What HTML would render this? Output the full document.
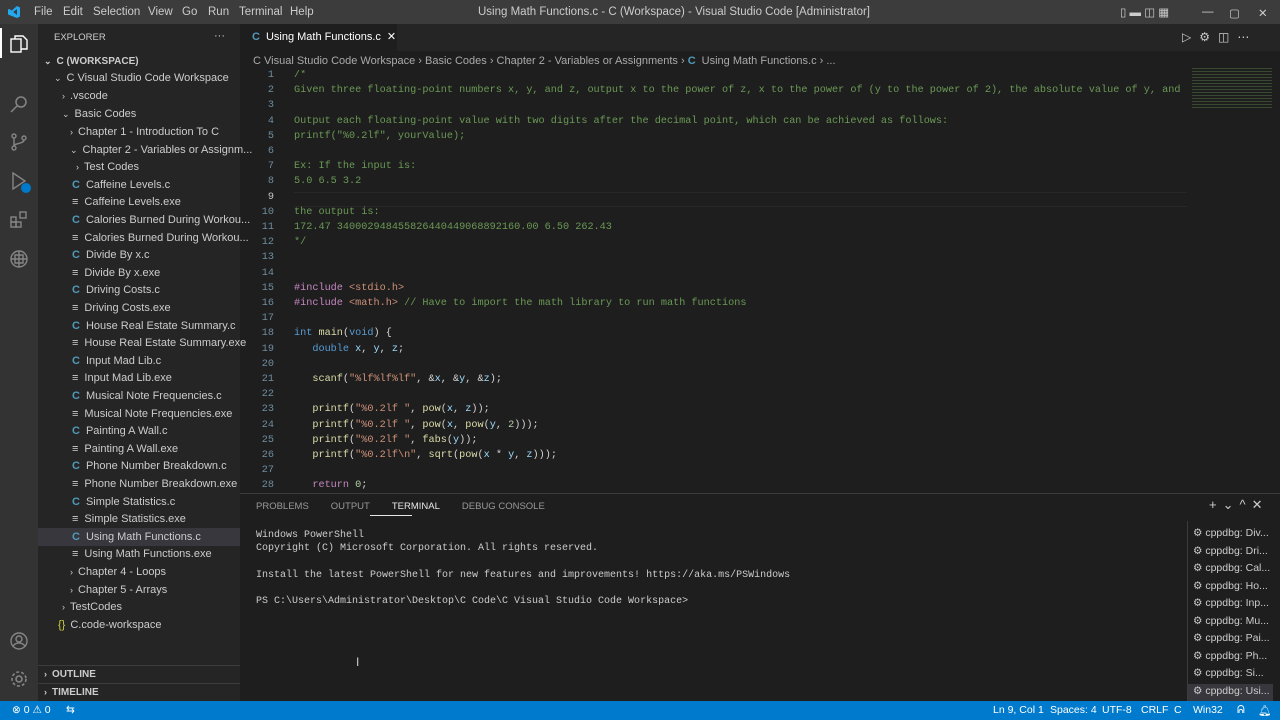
<!DOCTYPE html>
<html><head><meta charset="utf-8"><style>
*{margin:0;padding:0;box-sizing:border-box}
body{width:1280px;height:720px;overflow:hidden;background:#1e1e1e;font-family:"Liberation Sans",sans-serif;font-size:11px;color:#ccc;position:relative}
.abs{position:absolute}
#title{left:0;top:0;width:1280px;height:24px;background:#3c3c3c}
#title span{position:absolute;top:6px;font-size:11.5px;color:#ccc}
#act{left:0;top:24px;width:38px;height:677px;background:#333}
#side{left:38px;top:24px;width:202px;height:677px;background:#252526}
.it{position:absolute;font-size:11px;color:#ccc;white-space:nowrap;height:17px;line-height:17px}
.c{color:#519aba;font-weight:bold;margin-right:6px}
.car{color:#ccc;margin-right:5px;font-size:9px}
#code{left:240px;top:70px;width:950px;height:423px;overflow:hidden}
.ln{position:absolute;left:0;width:34px;text-align:right;color:#6f8ea0;font-family:"Liberation Mono",monospace;font-size:10.2px}
.cl{position:absolute;left:54px;white-space:pre;font-family:"Liberation Mono",monospace;font-size:10.2px;color:#d4d4d4}
.g{color:#6a9955}.k{color:#569cd6}.f{color:#dcdcaa}.s{color:#ce9178}.v{color:#9cdcfe}.n{color:#b5cea8}.p{color:#c586c0}
#status{left:0;top:701px;width:1280px;height:19px;background:#007acc;color:#fff}
#status span{position:absolute;top:3px;font-size:10.5px;white-space:nowrap}
.t{position:absolute;left:256px;white-space:pre;font-family:"Liberation Mono",monospace;font-size:10px;color:#ccc}
.dbg{position:absolute;left:1193px;font-size:10.5px;color:#ccc;white-space:nowrap}
</style></head><body>
<div id="title" class="abs">
<svg class="abs" style="left:7px;top:5px" width="14" height="14" viewBox="0 0 14 14"><path d="M10 1 L13 2.5 V11.5 L10 13 L3 7 L10 1Z M10 4 L6 7 L10 10Z M1 4.5 L2.5 4 L10 10 V13 L1 9.5 Z" fill="#23a9f2"/></svg>
<span style="left:34px">File</span><span style="left:63px">Edit</span><span style="left:93px">Selection</span><span style="left:148px">View</span><span style="left:182px">Go</span><span style="left:208px">Run</span><span style="left:239px">Terminal</span><span style="left:290px">Help</span>
<span style="left:478px">Using Math Functions.c - C (Workspace) - Visual Studio Code [Administrator]</span>
<span style="left:1120px;top:5px">▯ ▬ ◫ ▦</span><span style="left:1202px">—</span><span style="left:1229px">▢</span><span style="left:1258px">✕</span>
</div>
<div id="act" class="abs">
<div class="abs" style="left:0;top:4px;width:2px;height:30px;background:#fff"></div>
<svg class="abs" style="left:9px;top:10px" width="20" height="20" viewBox="0 0 20 20" fill="none" stroke="#fff" stroke-width="1.4"><path d="M6 5V2h8l4 4v9h-6"/><rect x="2" y="5" width="10" height="13"/></svg>
<svg class="abs" style="left:9px;top:70px" width="20" height="20" viewBox="0 0 20 20" fill="none" stroke="#858585" stroke-width="1.5"><circle cx="12" cy="8" r="5"/><path d="M8 12 L2 18"/></svg>
<svg class="abs" style="left:9px;top:108px" width="20" height="20" viewBox="0 0 20 20" fill="none" stroke="#858585" stroke-width="1.4"><circle cx="5" cy="4" r="2"/><circle cx="5" cy="16" r="2"/><circle cx="15" cy="6" r="2"/><path d="M5 6v8M15 8c0 4-10 3-10 6"/></svg>
<svg class="abs" style="left:8px;top:146px" width="24" height="24" viewBox="0 0 24 24" fill="none" stroke="#858585" stroke-width="1.4"><path d="M5 3 L17 11 L5 19Z"/><circle cx="18" cy="18" r="5" fill="#007acc" stroke="none"/></svg>
<svg class="abs" style="left:9px;top:186px" width="20" height="20" viewBox="0 0 20 20" fill="none" stroke="#858585" stroke-width="1.4"><rect x="2" y="7" width="5" height="5"/><rect x="7" y="12" width="5" height="5"/><rect x="2" y="12" width="5" height="5"/><rect x="11" y="2" width="6" height="6"/></svg>
<svg class="abs" style="left:9px;top:225px" width="20" height="20" viewBox="0 0 20 20" fill="none" stroke="#858585" stroke-width="1.4"><circle cx="10" cy="10" r="8"/><path d="M6 6h8v8H6zM10 2v16M2 10h16"/></svg>
<svg class="abs" style="left:9px;top:607px" width="20" height="20" viewBox="0 0 20 20" fill="none" stroke="#858585" stroke-width="1.4"><circle cx="10" cy="10" r="8"/><circle cx="10" cy="8" r="3"/><path d="M4 15c3-4 9-4 12 0"/></svg>
<svg class="abs" style="left:9px;top:645px" width="20" height="20" viewBox="0 0 20 20" fill="none" stroke="#858585" stroke-width="1.6"><circle cx="10" cy="10" r="3"/><circle cx="10" cy="10" r="7" stroke-dasharray="3 2"/></svg>
</div>
<div id="side" class="abs">
<div class="it" style="left:16px;top:5px;font-size:9.5px">EXPLORER</div><div class="it" style="left:176px;top:4px">···</div>
<div class="it" style="left:6px;top:29px;font-weight:bold;font-size:10px"><span class="car">⌄</span>C (WORKSPACE)</div>
<div class="it" style="left:16px;top:46px"><span class="car">⌄</span>C Visual Studio Code Workspace</div>
<div class="it" style="left:24px;top:64px"><span class="car">›</span>.vscode</div>
<div class="it" style="left:24px;top:82px"><span class="car">⌄</span>Basic Codes</div>
<div class="it" style="left:32px;top:100px"><span class="car">›</span>Chapter 1 - Introduction To C</div>
<div class="it" style="left:32px;top:118px"><span class="car">⌄</span>Chapter 2 - Variables or Assignm...</div>
<div class="it" style="left:38px;top:135px"><span class="car">›</span>Test Codes</div>
<div class="it" style="left:34px;top:153px"><span class="c">C</span>Caffeine Levels.c</div>
<div class="it" style="left:34px;top:170px"><span class="c" style="color:#ccc">≡</span>Caffeine Levels.exe</div>
<div class="it" style="left:34px;top:188px"><span class="c">C</span>Calories Burned During Workou...</div>
<div class="it" style="left:34px;top:206px"><span class="c" style="color:#ccc">≡</span>Calories Burned During Workou...</div>
<div class="it" style="left:34px;top:223px"><span class="c">C</span>Divide By x.c</div>
<div class="it" style="left:34px;top:241px"><span class="c" style="color:#ccc">≡</span>Divide By x.exe</div>
<div class="it" style="left:34px;top:258px"><span class="c">C</span>Driving Costs.c</div>
<div class="it" style="left:34px;top:276px"><span class="c" style="color:#ccc">≡</span>Driving Costs.exe</div>
<div class="it" style="left:34px;top:294px"><span class="c">C</span>House Real Estate Summary.c</div>
<div class="it" style="left:34px;top:311px"><span class="c" style="color:#ccc">≡</span>House Real Estate Summary.exe</div>
<div class="it" style="left:34px;top:329px"><span class="c">C</span>Input Mad Lib.c</div>
<div class="it" style="left:34px;top:346px"><span class="c" style="color:#ccc">≡</span>Input Mad Lib.exe</div>
<div class="it" style="left:34px;top:364px"><span class="c">C</span>Musical Note Frequencies.c</div>
<div class="it" style="left:34px;top:382px"><span class="c" style="color:#ccc">≡</span>Musical Note Frequencies.exe</div>
<div class="it" style="left:34px;top:399px"><span class="c">C</span>Painting A Wall.c</div>
<div class="it" style="left:34px;top:417px"><span class="c" style="color:#ccc">≡</span>Painting A Wall.exe</div>
<div class="it" style="left:34px;top:434px"><span class="c">C</span>Phone Number Breakdown.c</div>
<div class="it" style="left:34px;top:452px"><span class="c" style="color:#ccc">≡</span>Phone Number Breakdown.exe</div>
<div class="it" style="left:34px;top:470px"><span class="c">C</span>Simple Statistics.c</div>
<div class="it" style="left:34px;top:487px"><span class="c" style="color:#ccc">≡</span>Simple Statistics.exe</div>
<div class="abs" style="left:0;top:504px;width:202px;height:18px;background:#37373d"></div>
<div class="it" style="left:34px;top:505px"><span class="c">C</span>Using Math Functions.c</div>
<div class="it" style="left:34px;top:522px"><span class="c" style="color:#ccc">≡</span>Using Math Functions.exe</div>
<div class="it" style="left:32px;top:540px"><span class="car">›</span>Chapter 4 - Loops</div>
<div class="it" style="left:32px;top:558px"><span class="car">›</span>Chapter 5 - Arrays</div>
<div class="it" style="left:24px;top:575px"><span class="car">›</span>TestCodes</div>
<div class="it" style="left:20px;top:593px"><span style="color:#cbcb41;margin-right:5px">{}</span>C.code-workspace</div>
<div class="abs" style="left:0;top:641px;width:202px;height:1px;background:#3c3c3c"></div>
<div class="it" style="left:6px;top:642px;font-weight:bold;font-size:10px"><span class="car">›</span>OUTLINE</div>
<div class="abs" style="left:0;top:659px;width:202px;height:1px;background:#3c3c3c"></div>
<div class="it" style="left:6px;top:660px;font-weight:bold;font-size:10px"><span class="car">›</span>TIMELINE</div>
</div>
<div class="abs" style="left:240px;top:24px;width:1040px;height:27px;background:#252526"></div>
<div class="abs" style="left:240px;top:24px;width:157px;height:27px;background:#1e1e1e;font-size:11px;line-height:27px;padding-left:12px;color:#fff;white-space:nowrap"><span class="c">C</span>Using Math Functions.c<span style="margin-left:6px">✕</span></div>
<div class="abs" style="left:1182px;top:30px;color:#ccc;font-size:12px;letter-spacing:8px;white-space:nowrap">▷⚙◫⋯</div>
<div class="abs" style="left:253px;top:55px;font-size:11px;color:#aaa;white-space:nowrap">C Visual Studio Code Workspace › Basic Codes › Chapter 2 - Variables or Assignments › <span class="c">C</span>Using Math Functions.c › ...</div>
<div class="abs" style="left:294px;top:192px;width:893px;height:15px;border-top:1px solid #282828;border-bottom:1px solid #282828"></div>
<div id="code" class="abs">
<div class="ln" style="top:0">1</div><div class="cl g" style="top:0">/*</div>
<div class="ln" style="top:15.2px">2</div><div class="cl g" style="top:15.2px">Given three floating-point numbers x, y, and z, output x to the power of z, x to the power of (y to the power of 2), the absolute value of y, and</div>
<div class="ln" style="top:30.4px">3</div>
<div class="ln" style="top:45.6px">4</div><div class="cl g" style="top:45.6px">Output each floating-point value with two digits after the decimal point, which can be achieved as follows:</div>
<div class="ln" style="top:60.8px">5</div><div class="cl g" style="top:60.8px">printf("%0.2lf", yourValue);</div>
<div class="ln" style="top:76px">6</div>
<div class="ln" style="top:91.2px">7</div><div class="cl g" style="top:91.2px">Ex: If the input is:</div>
<div class="ln" style="top:106.4px">8</div><div class="cl g" style="top:106.4px">5.0 6.5 3.2</div>
<div class="ln" style="top:121.6px;color:#c6c6c6">9</div>
<div class="ln" style="top:136.8px">10</div><div class="cl g" style="top:136.8px">the output is:</div>
<div class="ln" style="top:152px">11</div><div class="cl g" style="top:152px">172.47 340002948455826440449068892160.00 6.50 262.43</div>
<div class="ln" style="top:167.2px">12</div><div class="cl g" style="top:167.2px">*/</div>
<div class="ln" style="top:182.4px">13</div>
<div class="ln" style="top:197.6px">14</div>
<div class="ln" style="top:212.8px">15</div><div class="cl" style="top:212.8px"><span class="p">#include</span> <span class="s">&lt;stdio.h&gt;</span></div>
<div class="ln" style="top:228px">16</div><div class="cl" style="top:228px"><span class="p">#include</span> <span class="s">&lt;math.h&gt;</span> <span class="g">// Have to import the math library to run math functions</span></div>
<div class="ln" style="top:243.2px">17</div>
<div class="ln" style="top:258.4px">18</div><div class="cl" style="top:258.4px"><span class="k">int</span> <span class="f">main</span>(<span class="k">void</span>) {</div>
<div class="ln" style="top:273.6px">19</div><div class="cl" style="top:273.6px">   <span class="k">double</span> <span class="v">x</span>, <span class="v">y</span>, <span class="v">z</span>;</div>
<div class="ln" style="top:288.8px">20</div>
<div class="ln" style="top:304px">21</div><div class="cl" style="top:304px">   <span class="f">scanf</span>(<span class="s">"%lf%lf%lf"</span>, &amp;<span class="v">x</span>, &amp;<span class="v">y</span>, &amp;<span class="v">z</span>);</div>
<div class="ln" style="top:319.2px">22</div>
<div class="ln" style="top:334.4px">23</div><div class="cl" style="top:334.4px">   <span class="f">printf</span>(<span class="s">"%0.2lf "</span>, <span class="f">pow</span>(<span class="v">x</span>, <span class="v">z</span>));</div>
<div class="ln" style="top:349.6px">24</div><div class="cl" style="top:349.6px">   <span class="f">printf</span>(<span class="s">"%0.2lf "</span>, <span class="f">pow</span>(<span class="v">x</span>, <span class="f">pow</span>(<span class="v">y</span>, <span class="n">2</span>)));</div>
<div class="ln" style="top:364.8px">25</div><div class="cl" style="top:364.8px">   <span class="f">printf</span>(<span class="s">"%0.2lf "</span>, <span class="f">fabs</span>(<span class="v">y</span>));</div>
<div class="ln" style="top:380px">26</div><div class="cl" style="top:380px">   <span class="f">printf</span>(<span class="s">"%0.2lf\n"</span>, <span class="f">sqrt</span>(<span class="f">pow</span>(<span class="v">x</span> * <span class="v">y</span>, <span class="v">z</span>)));</div>
<div class="ln" style="top:395.2px">27</div>
<div class="ln" style="top:410.4px">28</div><div class="cl" style="top:410.4px">   <span class="p">return</span> <span class="n">0</span>;</div>
</div>
<div class="abs" style="left:1192px;top:68px;width:80px;height:40px;opacity:.35;background:repeating-linear-gradient(#6a9955 0 1px,transparent 1px 3px);"></div>
<div class="abs" style="left:240px;top:493px;width:1040px;height:208px;background:#1e1e1e;border-top:1px solid #3c3c3c"></div>
<div class="abs" style="left:256px;top:501px;font-size:9.5px;color:#999;white-space:nowrap">PROBLEMS<span style="margin-left:22px">OUTPUT</span><span style="margin-left:22px;color:#e7e7e7">TERMINAL</span><span style="margin-left:22px">DEBUG CONSOLE</span></div>
<div class="abs" style="left:370px;top:515px;width:42px;height:1px;background:#e7e7e7"></div>
<div class="abs" style="left:1209px;top:497px;color:#ccc;font-size:13px;letter-spacing:6px;white-space:nowrap">+⌄^✕</div>
<div class="t" style="top:530px">Windows PowerShell</div>
<div class="t" style="top:543px">Copyright (C) Microsoft Corporation. All rights reserved.</div>
<div class="t" style="top:570px">Install the latest PowerShell for new features and improvements! https://aka.ms/PSWindows</div>
<div class="t" style="top:596px">PS C:\Users\Administrator\Desktop\C Code\C Visual Studio Code Workspace&gt;</div>
<div class="abs" style="left:356px;top:655px;color:#ccc;font-size:12px">I</div>
<div class="abs" style="left:1187px;top:521px;width:1px;height:180px;background:#3c3c3c"></div>
<div class="abs" style="left:1188px;top:684px;width:85px;height:17px;background:#37373d"></div>
<div class="dbg" style="top:527px">⚙ cppdbg: Div...</div>
<div class="dbg" style="top:545px">⚙ cppdbg: Dri...</div>
<div class="dbg" style="top:562px">⚙ cppdbg: Cal...</div>
<div class="dbg" style="top:580px">⚙ cppdbg: Ho...</div>
<div class="dbg" style="top:597px">⚙ cppdbg: Inp...</div>
<div class="dbg" style="top:615px">⚙ cppdbg: Mu...</div>
<div class="dbg" style="top:632px">⚙ cppdbg: Pai...</div>
<div class="dbg" style="top:650px">⚙ cppdbg: Ph...</div>
<div class="dbg" style="top:667px">⚙ cppdbg: Si...</div>
<div class="dbg" style="top:685px">⚙ cppdbg: Usi...</div>
<div id="status" class="abs">
<span style="left:12px">⊗ 0 ⚠ 0</span><span style="left:66px">⇆</span>
<span style="left:993px">Ln 9, Col 1</span><span style="left:1050px">Spaces: 4</span><span style="left:1102px">UTF-8</span><span style="left:1141px">CRLF</span><span style="left:1174px">C</span><span style="left:1193px">Win32</span><span style="left:1237px">ᕱ</span><span style="left:1258px">🔔︎</span>
</div>
</body></html>
